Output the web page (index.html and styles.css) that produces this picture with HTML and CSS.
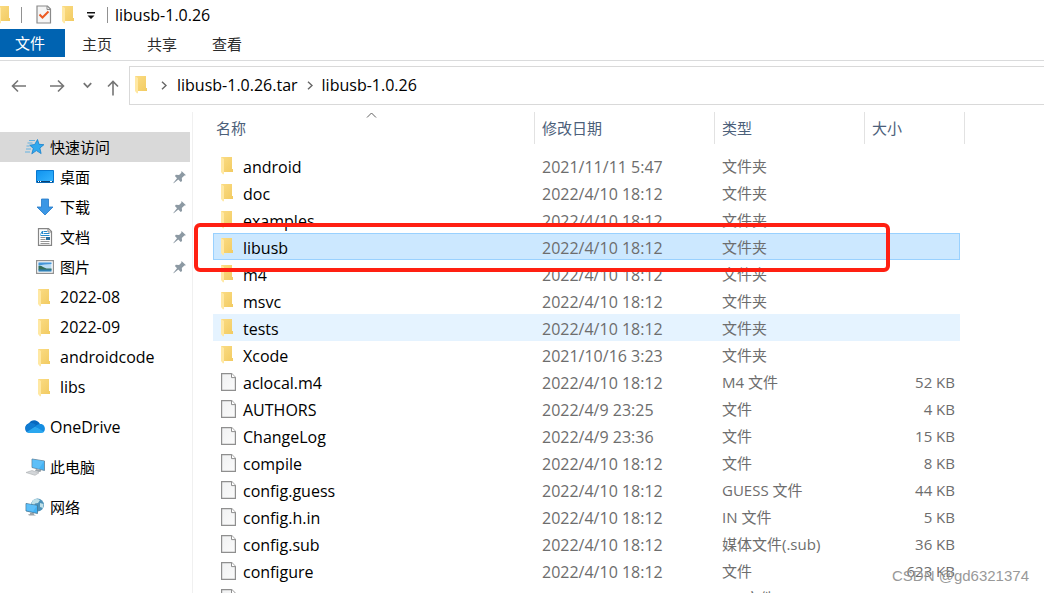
FILE: index.html
```
<!DOCTYPE html>
<html lang="zh-CN">
<head>
<meta charset="utf-8">
<title>libusb-1.0.26</title>
<link rel="stylesheet" href="styles.css">
</head>
<body>
<svg class="defs" aria-hidden="true">
  <defs>
    <linearGradient id="gold" x1="0" x2="1" y1="0" y2="1"><stop offset="0" stop-color="#fbdc84"/><stop offset="1" stop-color="#f2cb62"/></linearGradient>
    <linearGradient id="blue" x1="0" x2="1" y1="0" y2="1"><stop offset="0" stop-color="#0f92ee"/><stop offset="1" stop-color="#38b6ff"/></linearGradient>
    <linearGradient id="paper" x1="0" x2="1" y1="0" y2="1"><stop offset="0" stop-color="#f0f1f2"/><stop offset="1" stop-color="#fbfbfb"/></linearGradient>
    <symbol id="folder" viewBox="0 0 14 18"><path d="M1 0h11v12h1v3H4L1 13z" fill="url(#gold)"/><path d="M1 0l3 2v15l-1 .5L1 15z" fill="#ffe8a3"/></symbol>
    <symbol id="file" viewBox="0 0 15 18"><path d="M.6.6h10l3.800 3.800v13H.6z" fill="url(#paper)" stroke="#8f8f8f" stroke-width="1.200"/><path d="M10.500.6v4h4" fill="#fff" stroke="#8f8f8f"/></symbol>
    <symbol id="pin" viewBox="0 0 14 14"><path d="M8.500 1L13 5.200l-1.600.3-2.600 2.600.3 2.900-1.400 1L5.300 9.600.7 13.300l-.4-.4L4 8.300 1.900 6l1-1.300 3.200.2L8.300 2.700z" fill="#8c99a3"/></symbol>
  </defs>
</svg>
<div class="window">
  <header class="titlebar">
    <svg class="folder" aria-hidden="true"><use href="#folder"/></svg>
    <span class="rule"></span>
    <svg class="check" viewBox="0 0 16 19" aria-hidden="true"><path d="M1 1h10.500l3 3v14H1z" fill="#f5f5f5" stroke="#8a8a8a" stroke-width="1.200"/><path d="M11 1v3.500h3.500" fill="none" stroke="#8a8a8a"/><path d="M3.500 9.500l3 3 6-6" fill="none" stroke="#ec5a22" stroke-width="2"/></svg>
    <svg class="folder" aria-hidden="true"><use href="#folder"/></svg>
    <svg class="more" viewBox="0 0 8 7" aria-hidden="true"><path d="M0 0h8v1.500H0zM.5 3.500h7L4 7z" fill="#111"/></svg>
    <span class="rule"></span>
    <h1 class="title">libusb-1.0.26</h1>
  </header>
  <nav class="ribbon">
    <button class="tab tab-active">文件</button>
    <button class="tab">主页</button>
    <button class="tab">共享</button>
    <button class="tab">查看</button>
  </nav>
  <div class="toolbar">
    <div class="history">
      <button class="arrow" aria-label="后退"><svg viewBox="0 0 16 14"><path d="M15 7H1.500M7 1.500L1.500 7 7 12.500"/></svg></button>
      <button class="arrow" aria-label="前进"><svg viewBox="0 0 16 14"><path d="M1 7h13.500M9 1.500L14.500 7 9 12.500"/></svg></button>
      <button class="arrow small" aria-label="最近位置"><svg viewBox="0 0 8 6"><path d="M.7 1L4 4.500 7.300 1"/></svg></button>
      <button class="arrow up" aria-label="上移"><svg viewBox="0 0 12 16"><path d="M6 15.500V1.500M1 6.500l5-5 5 5"/></svg></button>
    </div>
    <div class="address">
      <svg class="folder" aria-hidden="true"><use href="#folder"/></svg>
      <svg class="chevron" viewBox="0 0 6 9" aria-hidden="true"><path d="M1 .7L5 4.500 1 8.300"/></svg>
      <button class="crumb">libusb-1.0.26.tar</button>
      <svg class="chevron" viewBox="0 0 6 9" aria-hidden="true"><path d="M1 .7L5 4.500 1 8.300"/></svg>
      <button class="crumb">libusb-1.0.26</button>
    </div>
  </div>
  <div class="content">
    <nav class="sidebar">
      <a class="place root current" href="#"><svg class="ico" viewBox="0 0 20 18"><path d="M12.500 1.500l1.500 4.800 4.900.4-4 3.300 1.200 5.600-4.700-3-4.600 3.200 1.500-5.400-3.600-3.200 5-.7z" fill="#31a9ee" stroke="#1580cd" stroke-width=".8"/><path d="M4 2.500h6M2.500 5h5M1.500 8h3M1 11h5M0 14h5" stroke="#57aee2" stroke-width=".9"/></svg>快速访问</a>
      <a class="place" href="#"><svg class="ico" viewBox="0 0 20 18"><path d="M1.500 2.500h17v12h-17z" fill="url(#blue)" stroke="#0878d0"/><path d="M2 13h16v1.300H2z" fill="#0a3f70"/><path d="M3 13.500h1m1 0h1m9 0h2" stroke="#fff"/></svg>桌面<svg class="pin"><use href="#pin"/></svg></a>
      <a class="place" href="#"><svg class="ico" viewBox="0 0 20 18"><path d="M6.500 1h7v8H18l-8 8-8-8h4.500z" fill="#3b97e5" stroke="#2379c8" stroke-width=".8"/></svg>下载<svg class="pin"><use href="#pin"/></svg></a>
      <a class="place" href="#"><svg class="ico" viewBox="0 0 20 18"><path d="M3.500.6h10l3 3v13.800h-13z" fill="#fff" stroke="#858585" stroke-width="1.200"/><path d="M13 1v3h3.500" fill="none" stroke="#858585"/><path d="M8.500 3.500H12M8.500 5.500h6M5.500 7.500h9" stroke="#2689cc"/><path d="M5.500 6.500l2-3.500v3" fill="none" stroke="#2689cc"/><path d="M5.500 9.500h5m-5 2h5m-5 2h9m-9 2h9" stroke="#8a8a8a" stroke-width=".9"/><path d="M11 9h4v3h-4z" fill="#286e9f"/></svg>文档<svg class="pin"><use href="#pin"/></svg></a>
      <a class="place" href="#"><svg class="ico" viewBox="0 0 20 18"><path d="M1.600 2.600h16.800v12.800H1.600z" fill="#fff" stroke="#929292" stroke-width="1.200"/><path d="M3.500 4.500h13v9h-13z" fill="#b9dcf5"/><path d="M3.500 4.500h13v1.500l-7 .5-6 1z" fill="#4595d8"/><path d="M3.500 8c3-1 5 2 8 2.500h5v1.500h-13z" fill="#356e58"/><path d="M3.500 11.500h13v2h-13z" fill="#3180b4"/></svg>图片<svg class="pin"><use href="#pin"/></svg></a>
      <a class="place" href="#"><svg class="ico dir"><use href="#folder"/></svg>2022-08</a>
      <a class="place" href="#"><svg class="ico dir"><use href="#folder"/></svg>2022-09</a>
      <a class="place" href="#"><svg class="ico dir"><use href="#folder"/></svg>androidcode</a>
      <a class="place" href="#"><svg class="ico dir"><use href="#folder"/></svg>libs</a>
      <a class="place root latin" href="#"><svg class="ico" viewBox="0 0 20 18"><path d="M5 15a5 5 0 0 1-1-9.800C6 1.500 12 .5 15 6l-4 5z" fill="#0768bf"/><path d="M4 5.500c3-1 5 0 7 1.500l-9 7.500C-1 12 0 6.500 4 5.500z" fill="#107bd2"/><path d="M15 6c5-.5 6.500 6 3 8.500l-8-6C11.500 7 13 6 15 6z" fill="#158de1"/><path d="M1.800 14L10 8.500l9 5.300A4 4 0 0 1 16 15H5c-1.300 0-2.500-.4-3.200-1z" fill="#2aa7ef"/></svg>OneDrive</a>
      <a class="place root" href="#"><svg class="ico" viewBox="0 0 20 18"><path d="M7 1l12.500 2v9.500L7 9.500z" fill="#45b3f5" stroke="#5f7f95" stroke-width=".8"/><path d="M7.500 1.500L19 3.300 14 10.800 7.500 9z" fill="#5dbff8"/><path d="M11 11l5 1v1.500l-2 .5-4-1z" fill="#9aa2a8"/><path d="M1 14.500l6-2 7 2.300-4 2.500z" fill="#d3d6d9" stroke="#a9adb0" stroke-width=".6"/></svg>此电脑</a>
      <a class="place root" href="#"><svg class="ico" viewBox="0 0 20 18"><circle cx="12.500" cy="7" r="6.500" fill="#4c91b8"/><path d="M8 2c2-1.500 5-1.500 7 0l-2 3-3 .5-1 2-3-1zM15 5l3.500 1-.5 4-3-1z" fill="#bfe0e8"/><path d="M1 5.500l11.500 2v8L1 13z" fill="#42b2f5" stroke="#457591" stroke-width=".8"/><path d="M1.500 6l10.500 1.800-4 5.700-6.500-1.300z" fill="#5dbff8"/><path d="M5 14.500l4 .7v1.300l2 1H4l-1-1 2-.5z" fill="#9da4a9"/></svg>网络</a>
    </nav>
    <main class="files">
      <svg class="sort" viewBox="0 0 10 6" aria-hidden="true"><path d="M.5 5.500L5 1l4.500 4.500"/></svg>
      <table class="list">
        <thead><tr><th class="c-name">名称</th><th class="c-date">修改日期</th><th class="c-type">类型</th><th class="c-size">大小</th></tr></thead>
        <tbody>
          <tr><td><svg class="fi"><use href="#folder"/></svg>android</td><td>2021/11/11 5:47</td><td>文件夹</td><td></td></tr>
          <tr><td><svg class="fi"><use href="#folder"/></svg>doc</td><td>2022/4/10 18:12</td><td>文件夹</td><td></td></tr>
          <tr><td><svg class="fi"><use href="#folder"/></svg>examples</td><td>2022/4/10 18:12</td><td>文件夹</td><td></td></tr>
          <tr class="selected"><td><svg class="fi"><use href="#folder"/></svg>libusb</td><td>2022/4/10 18:12</td><td>文件夹</td><td></td></tr>
          <tr><td><svg class="fi"><use href="#folder"/></svg>m4</td><td>2022/4/10 18:12</td><td>文件夹</td><td></td></tr>
          <tr><td><svg class="fi"><use href="#folder"/></svg>msvc</td><td>2022/4/10 18:12</td><td>文件夹</td><td></td></tr>
          <tr class="hover"><td><svg class="fi"><use href="#folder"/></svg>tests</td><td>2022/4/10 18:12</td><td>文件夹</td><td></td></tr>
          <tr><td><svg class="fi"><use href="#folder"/></svg>Xcode</td><td>2021/10/16 3:23</td><td>文件夹</td><td></td></tr>
          <tr><td><svg class="fi doc"><use href="#file"/></svg>aclocal.m4</td><td>2022/4/10 18:12</td><td>M4 文件</td><td>52 KB</td></tr>
          <tr><td><svg class="fi doc"><use href="#file"/></svg>AUTHORS</td><td>2022/4/9 23:25</td><td>文件</td><td>4 KB</td></tr>
          <tr><td><svg class="fi doc"><use href="#file"/></svg>ChangeLog</td><td>2022/4/9 23:36</td><td>文件</td><td>15 KB</td></tr>
          <tr><td><svg class="fi doc"><use href="#file"/></svg>compile</td><td>2022/4/10 18:12</td><td>文件</td><td>8 KB</td></tr>
          <tr><td><svg class="fi doc"><use href="#file"/></svg>config.guess</td><td>2022/4/10 18:12</td><td>GUESS 文件</td><td>44 KB</td></tr>
          <tr><td><svg class="fi doc"><use href="#file"/></svg>config.h.in</td><td>2022/4/10 18:12</td><td>IN 文件</td><td>5 KB</td></tr>
          <tr><td><svg class="fi doc"><use href="#file"/></svg>config.sub</td><td>2022/4/10 18:12</td><td>媒体文件(.sub)</td><td>36 KB</td></tr>
          <tr><td><svg class="fi doc"><use href="#file"/></svg>configure</td><td>2022/4/10 18:12</td><td>文件</td><td>623 KB</td></tr>
          <tr><td><svg class="fi doc"><use href="#file"/></svg>configure.ac</td><td>2022/4/9 23:25</td><td>AC 文件</td><td>12 KB</td></tr>
        </tbody>
      </table>
      <div class="marker"></div>
    </main>
  </div>
  <div class="watermark">CSDN @gd6321374</div>
</div>
</body>
</html>
```
FILE: styles.css
```
* { box-sizing: border-box; }
body {
  margin: 0;
  background: #fff;
  color: #000;
  font: 15px/20px "Open Sans", "Noto Sans CJK SC", sans-serif;
}
button {
  font: inherit;
  color: inherit;
  background: none;
  border: 0;
  padding: 0;
}
svg { display: block; flex: none; }
.defs { position: absolute; width: 0; height: 0; }
.window {
  position: relative;
  display: flex;
  flex-direction: column;
  height: 100vh;
  overflow: hidden;
}

.titlebar {
  display: flex;
  align-items: center;
  flex: none;
  height: 29px;
}
.folder { width: 14px; height: 18px; }
.titlebar .folder:first-child { margin-left: -3px; }
.rule { width: 1px; height: 16px; background: #919191; margin-left: 10px; }
.check { width: 16px; height: 19px; margin: 0 9px 0 14px; }
.more { width: 8px; height: 7px; margin: 2px 2px 0 12px; }
.title { margin: 0 0 0 7px; font-size: 16px; font-weight: 400; }

.ribbon {
  display: flex;
  flex: none;
  height: 32px;
  border-bottom: 1px solid #dadbdc;
}
.tab { width: 65px; height: 28px; padding: 2px 1px 0 0; color: #2b2b2b; }
.tab-active { background: #0063b1; color: #fff; padding: 0 5px 0 0; }

.toolbar {
  display: flex;
  flex: none;
  height: 44px;
  padding-top: 5px;
}
.history {
  display: flex;
  align-items: center;
  width: 129px;
  padding-left: 11px;
}
.arrow { width: 16px; margin-right: 22px; }
.arrow svg { width: 100%; fill: none; stroke: #757575; stroke-width: 1.6; }
.arrow.small { width: 9px; margin: 0 19px 0 -4px; }
.arrow.up { width: 12px; margin: 4px 0 0 -4px; }
.address {
  display: flex;
  align-items: center;
  flex: 1;
  border: 1px solid #d9d9d9;
  border-right: 0;
  padding: 0 0 1px 4px;
  font-size: 16px;
}
.chevron { width: 6px; height: 9px; margin: 0 9px; fill: none; stroke: #666; stroke-width: 1.4; }
.folder + .chevron { margin: 0 10px 0 13px; }

.content { display: flex; flex: 1; min-height: 0; padding-top: 7px; }
.sidebar {
  flex: none;
  width: 193px;
  padding: 20px 2px 0 0;
  border-right: 1px solid #f0f0f0;
}
.place {
  display: flex;
  align-items: center;
  height: 30px;
  padding: 0 3px 0 35px;
  color: inherit;
  font-size: 16px;
  text-decoration: none;
}
.place:has(.pin), .root { font-size: 15px; }
.root { margin-top: 10px; padding-left: 25px; }
.latin { font-size: 16px; }
.current { margin-top: 0; background: #d9d9d9; }
.ico { width: 20px; height: 18px; margin-right: 5px; }
.dir { width: 14px; margin: 2px 9px 0 2px; }
.pin { width: 14px; height: 14px; margin-left: auto; }

.files { position: relative; flex: 1; padding-left: 20px; }
.sort {
  position: absolute;
  left: 173px;
  top: 0;
  width: 11px;
  height: 6px;
  fill: none;
  stroke: #606060;
}
.list {
  width: 747px;
  table-layout: fixed;
  border-collapse: separate;
  border-spacing: 0;
}
th {
  position: relative;
  height: 32px;
  padding: 0 0 0 7px;
  border-right: 1px solid #e2e2e2;
  color: #4c607a;
  font-weight: 400;
  text-align: left;
}
.c-name { width: 322px; padding-left: 3px; }
.c-date { width: 180px; }
.c-type { width: 150px; }
.c-size { border-right: 0; }
.c-size::after {
  content: "";
  position: absolute;
  top: 0;
  right: -5px;
  width: 1px;
  height: 100%;
  background: #e2e2e2;
}
tbody::before { content: ""; display: block; height: 8px; }
td {
  height: 27px;
  padding: 1px 0 0 7px;
  color: #6d6d6d;
  white-space: nowrap;
}
td:first-child { display: flex; align-items: center; padding: 2px 0 0 7px; color: #000; font-size: 16px; }
td:nth-child(2) { padding-top: 2px; font-size: 16px; }
td:last-child { padding: 0 5px 0 0; text-align: right; }
.fi { width: 14px; height: 18px; margin: 0 9px 2px 0; }
.doc { width: 15px; margin: 0 7px 2px 1px; }
.selected { background: #cce8ff; outline: 1px solid #99d1ff; outline-offset: -1px; }
.hover { background: #e5f3ff; }
.marker {
  position: absolute;
  left: 1px;
  top: 111px;
  width: 696px;
  height: 49px;
  border: 4px solid #ff2012;
  border-radius: 6px;
}
.watermark {
  position: absolute;
  right: 15px;
  bottom: 7px;
  color: #999;
  font-family: "Liberation Sans", sans-serif;
}
```
